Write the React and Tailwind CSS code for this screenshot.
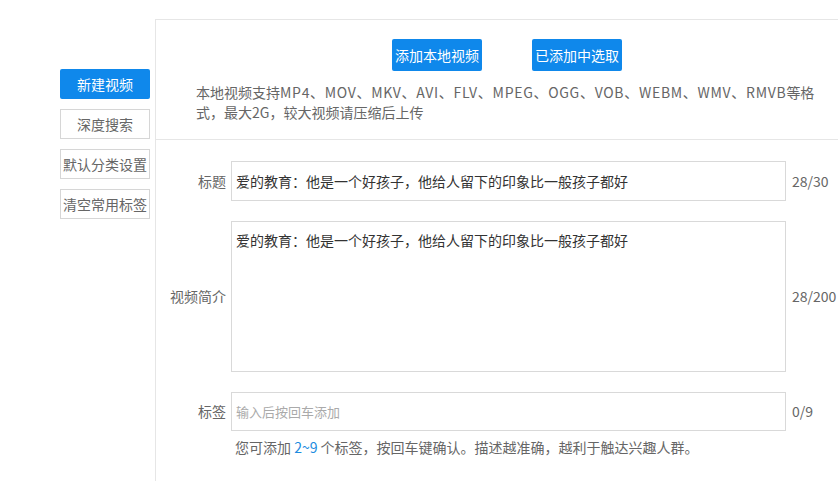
import React from 'react';

const font = { fontFamily: '"Microsoft YaHei", "Noto Sans CJK SC", "Noto Sans", sans-serif' };

const SideButton = ({ children, active }) => (
  <button
    className={
      active
        ? 'w-[90px] h-[30px] rounded-[2px] bg-[#0f88eb] text-white text-[14px] leading-[30px]'
        : 'w-[90px] h-[30px] border border-[#d6d6d6] bg-white text-[#666] text-[14px] leading-[28px]'
    }
  >
    {children}
  </button>
);

const App = () => {
  return (
    <div className="flex w-[838px] h-[481px] overflow-hidden bg-white" style={font}>
      {/* sidebar */}
      <div className="w-[155px] shrink-0 pl-[60px] pt-[69px] flex flex-col gap-[10px]">
        <SideButton active>新建视频</SideButton>
        <SideButton>深度搜索</SideButton>
        <SideButton>默认分类设置</SideButton>
        <SideButton>清空常用标签</SideButton>
      </div>

      {/* main panel */}
      <div className="flex-1 min-w-0 mt-[19px] border-l border-t border-[#e6e6e6]">
        <div className="border-b border-[#e6e6e6] pt-[19px] pb-[17px] pl-[40px] pr-[20px]">
          <div className="flex justify-center gap-[50px]">
            <button className="w-[90px] h-[32px] rounded-[2px] bg-[#0f88eb] text-white text-[14px]">添加本地视频</button>
            <button className="w-[90px] h-[32px] rounded-[2px] bg-[#0f88eb] text-white text-[14px]">已添加中选取</button>
          </div>
          <p className="mt-[11px] text-[14px] leading-[20px] text-[#666]">
            本地视频支持<span className="tracking-[0.7px]">MP4、MOV、MKV、AVI、FLV、MPEG、OGG、VOB、WEBM、WMV、RMVB</span>等格式，最大2G，较大视频请压缩后上传
          </p>
        </div>

        <div className="pt-[21px] flex flex-col gap-[20px]">
          <div className="flex items-center">
            <label className="w-[75px] pr-[5px] text-right text-[14px] text-[#666]">标题</label>
            <div className="w-[555px] h-[40px] border border-[#d9d9d9] px-[4px] flex items-center text-[14px] text-[#333]">
              爱的教育：他是一个好孩子，他给人留下的印象比一般孩子都好
            </div>
            <span className="ml-[6px] text-[14px] text-[#666] whitespace-nowrap">28/30</span>
          </div>

          <div className="flex items-center">
            <label className="w-[75px] pr-[5px] text-right text-[14px] text-[#666]">视频简介</label>
            <div className="w-[555px] h-[151px] border border-[#d9d9d9] px-[4px] pt-[8px] text-[14px] leading-[20px] text-[#333]">
              爱的教育：他是一个好孩子，他给人留下的印象比一般孩子都好
            </div>
            <span className="ml-[6px] text-[14px] text-[#666] whitespace-nowrap">28/200</span>
          </div>

          <div>
            <div className="flex items-center">
              <label className="w-[75px] pr-[5px] text-right text-[14px] text-[#666]">标签</label>
              <div className="w-[555px] h-[39px] border border-[#d9d9d9] px-[4px] flex items-center text-[13px] text-[#aaa]">
                输入后按回车添加
              </div>
              <span className="ml-[6px] text-[14px] text-[#666] whitespace-nowrap">0/9</span>
            </div>
            <p className="pl-[79px] mt-[6px] text-[14px] leading-[20px] text-[#666]">
              您可添加 <span className="text-[#1c8ce0]">2~9</span> 个标签，按回车键确认。描述越准确，越利于触达兴趣人群。
            </p>
          </div>
        </div>
      </div>
    </div>
  );
};

export default App;
